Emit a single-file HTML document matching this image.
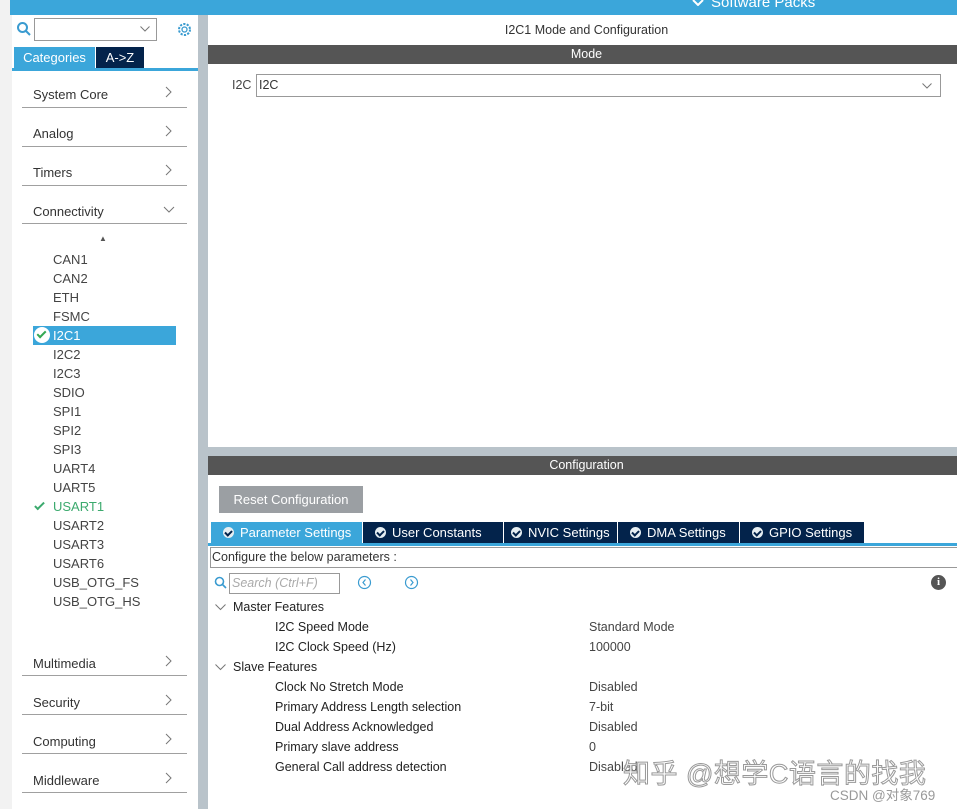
<!DOCTYPE html>
<html><head><meta charset="utf-8"><style>
*{margin:0;padding:0;box-sizing:border-box}
body{width:957px;height:809px;overflow:hidden;background:#b9c3ca;font-family:"Liberation Sans","Noto Sans CJK SC",sans-serif;font-size:12.5px;color:#333;position:relative}
.a{position:absolute;white-space:nowrap}
.cat{position:absolute;left:33px;font-size:13px;color:#333}
.cl{position:absolute;left:22px;width:165px;height:1px;background:#a0a0a0}
.chev{position:absolute;left:165px}
.it{position:absolute;left:53px;font-size:13px;color:#444}
.tab{position:absolute;top:522px;height:21px;background:#03234b;color:#fff;font-size:13px;line-height:21px;padding-left:12px}
.ck{display:inline-block;width:11px;height:11px;border-radius:50%;background:#e6eef2;margin-right:6px;vertical-align:-1px;position:relative}
.ck:after{content:"";position:absolute;left:3px;top:2px;width:3px;height:5px;border:solid #03234b;border-width:0 2px 2px 0;transform:rotate(45deg)}
.row{position:absolute;font-size:12.5px;color:#222}
</style></head><body>
<div class="a" style="left:0;top:0;width:12px;height:809px;background:#f2f2f2"></div>
<div class="a" style="left:10px;top:0;width:947px;height:15px;background:#3ba6da"></div>
<svg class="a" style="left:692px;top:0" width="12" height="6"><polyline points="1,0 6,5 11,0" fill="none" stroke="#fff" stroke-width="2"/></svg>
<div class="a" style="left:711px;top:-6px;color:#fff;font-size:15px">Software Packs</div>
<div class="a" style="left:12px;top:15px;width:186px;height:794px;background:#fff"></div>
<div class="a" style="left:208px;top:15px;width:749px;height:432px;background:#fff"></div>
<div class="a" style="left:208px;top:456px;width:749px;height:353px;background:#fff"></div>
<svg class="a" style="left:16px;top:21px" width="16" height="16"><circle cx="6.5" cy="6.5" r="4.5" fill="none" stroke="#3a9bd0" stroke-width="2"/><line x1="10" y1="10" x2="14" y2="14" stroke="#3a9bd0" stroke-width="2"/></svg>
<div class="a" style="left:34px;top:18px;width:123px;height:23px;border:1px solid #999;background:#fff"></div>
<svg class="a" style="left:140px;top:26px" width="10" height="6"><polyline points="0.5,0.5 5,5 9.5,0.5" fill="none" stroke="#777" stroke-width="1"/></svg>
<svg class="a" style="left:176px;top:21px" width="17" height="17"><circle cx="8.5" cy="8.5" r="5.5" fill="none" stroke="#3a9bd0" stroke-width="2" stroke-dasharray="2.2 1.3"/><circle cx="8.5" cy="8.5" r="2.5" fill="none" stroke="#3a9bd0" stroke-width="1.3"/></svg>
<div class="a" style="left:14px;top:47px;width:81px;height:21px;background:#3ba6da;color:#fff;font-size:13px;line-height:21px;text-align:center">Categories</div>
<div class="a" style="left:96px;top:47px;width:48px;height:21px;background:#03234b;color:#fff;font-size:13px;line-height:21px;text-align:center">A-&gt;Z</div>
<div class="a" style="left:12px;top:68px;width:186px;height:3px;background:#3ba6da"></div>
<div class="cat" style="top:87px">System Core</div><svg class="chev" style="top:86px" width="8" height="12"><polyline points="1,1 6,6 1,11" fill="none" stroke="#777"/></svg><div class="cl" style="top:107px"></div>
<div class="cat" style="top:126px">Analog</div><svg class="chev" style="top:125px" width="8" height="12"><polyline points="1,1 6,6 1,11" fill="none" stroke="#777"/></svg><div class="cl" style="top:146px"></div>
<div class="cat" style="top:165px">Timers</div><svg class="chev" style="top:164px" width="8" height="12"><polyline points="1,1 6,6 1,11" fill="none" stroke="#777"/></svg><div class="cl" style="top:185px"></div>
<div class="cat" style="top:204px">Connectivity</div><svg class="a" style="left:163px;top:206px" width="12" height="7"><polyline points="1,1 6,6 11,1" fill="none" stroke="#777"/></svg><div class="cl" style="top:223px"></div>
<div class="a" style="left:99px;top:234px;font-size:8px;color:#555">▲</div>
<div class="it" style="top:252px">CAN1</div>
<div class="it" style="top:271px">CAN2</div>
<div class="it" style="top:290px">ETH</div>
<div class="it" style="top:309px">FSMC</div>
<div class="a" style="left:33px;top:326px;width:143px;height:19px;background:#3ba6da"></div>
<div class="a" style="left:34px;top:327px;width:16px;height:16px;border-radius:50%;background:#fff"></div>
<div class="a" style="left:39px;top:329px;width:5px;height:9px;border:solid #34a853;border-width:0 2.5px 2.5px 0;transform:rotate(45deg)"></div>
<div class="it" style="top:328px;color:#fff">I2C1</div>
<div class="it" style="top:347px">I2C2</div>
<div class="it" style="top:366px">I2C3</div>
<div class="it" style="top:385px">SDIO</div>
<div class="it" style="top:404px">SPI1</div>
<div class="it" style="top:423px">SPI2</div>
<div class="it" style="top:442px">SPI3</div>
<div class="it" style="top:461px">UART4</div>
<div class="it" style="top:480px">UART5</div>
<div class="a" style="left:37px;top:500px;width:5px;height:10px;border:solid #3caa6e;border-width:0 2.5px 2.5px 0;transform:rotate(45deg)"></div>
<div class="it" style="top:499px;color:#3caa6e">USART1</div>
<div class="it" style="top:518px">USART2</div>
<div class="it" style="top:537px">USART3</div>
<div class="it" style="top:556px">USART6</div>
<div class="it" style="top:575px">USB_OTG_FS</div>
<div class="it" style="top:594px">USB_OTG_HS</div>
<div class="cat" style="top:656px">Multimedia</div><svg class="chev" style="top:655px" width="8" height="12"><polyline points="1,1 6,6 1,11" fill="none" stroke="#777"/></svg><div class="cl" style="top:675px"></div>
<div class="cat" style="top:695px">Security</div><svg class="chev" style="top:694px" width="8" height="12"><polyline points="1,1 6,6 1,11" fill="none" stroke="#777"/></svg><div class="cl" style="top:714px"></div>
<div class="cat" style="top:734px">Computing</div><svg class="chev" style="top:733px" width="8" height="12"><polyline points="1,1 6,6 1,11" fill="none" stroke="#777"/></svg><div class="cl" style="top:753px"></div>
<div class="cat" style="top:773px">Middleware</div><svg class="chev" style="top:772px" width="8" height="12"><polyline points="1,1 6,6 1,11" fill="none" stroke="#777"/></svg><div class="cl" style="top:792px"></div>
<div class="a" style="left:212px;top:23px;width:749px;text-align:center;font-size:12.5px;color:#333">I2C1 Mode and Configuration</div>
<div class="a" style="left:212px;top:45px;width:749px;height:19px;background:#555;color:#fff;text-align:center;font-size:12.5px;line-height:19px">Mode</div>
<div class="a" style="left:208px;top:45px;width:6px;height:19px;background:#555"></div>
<div class="a" style="left:232px;top:78px;font-size:12.5px;color:#444">I2C</div>
<div class="a" style="left:256px;top:74px;width:685px;height:23px;border:1px solid #999;padding:3px 2px;font-size:12.5px;color:#333">I2C</div>
<svg class="a" style="left:922px;top:83px" width="10" height="6"><polyline points="0.5,0.5 5,5 9.5,0.5" fill="none" stroke="#777"/></svg>
<div class="a" style="left:208px;top:456px;width:749px;height:19px;background:#555;color:#fff;text-align:center;font-size:12.5px;line-height:19px;padding-left:8px">Configuration</div>
<div class="a" style="left:219px;top:486px;width:144px;height:27px;background:#9b9fa3;color:#fff;font-size:13px;line-height:27px;text-align:center">Reset Configuration</div>
<div class="tab" style="left:211px;width:151px;background:#3ba6da"><span class="ck"></span>Parameter Settings</div>
<div class="tab" style="left:363px;width:140px"><span class="ck"></span>User Constants</div>
<div class="tab" style="left:504px;width:113px;padding-left:7px"><span class="ck"></span>NVIC Settings</div>
<div class="tab" style="left:618px;width:121px"><span class="ck"></span>DMA Settings</div>
<div class="tab" style="left:740px;width:124px"><span class="ck"></span>GPIO Settings</div>
<div class="a" style="left:208px;top:543px;width:749px;height:3px;background:#3ba6da"></div>
<div class="a" style="left:210px;top:547px;width:750px;height:21px;border:1px solid #999;padding:2px 1px;font-size:12.5px;color:#333">Configure the below parameters :</div>
<svg class="a" style="left:214px;top:576px" width="14" height="14"><circle cx="5.5" cy="5.5" r="4" fill="none" stroke="#3a9bd0" stroke-width="1.6"/><line x1="8.5" y1="8.5" x2="12" y2="12" stroke="#3a9bd0" stroke-width="1.6"/></svg>
<div class="a" style="left:229px;top:573px;width:111px;height:21px;border:1px solid #999;padding:2px 2px;font-size:12.5px;color:#aaa;font-style:italic">Search (Ctrl+F)</div>
<svg class="a" style="left:357px;top:575px" width="15" height="15"><circle cx="7.5" cy="7.5" r="6" fill="none" stroke="#3a9bd0" stroke-width="1.2"/><polyline points="8.5,4.5 6,7.5 8.5,10.5" fill="none" stroke="#3a9bd0" stroke-width="1.2"/></svg>
<svg class="a" style="left:404px;top:575px" width="15" height="15"><circle cx="7.5" cy="7.5" r="6" fill="none" stroke="#3a9bd0" stroke-width="1.2"/><polyline points="6.5,4.5 9,7.5 6.5,10.5" fill="none" stroke="#3a9bd0" stroke-width="1.2"/></svg>
<div class="a" style="left:931px;top:575px;width:15px;height:15px;border-radius:50%;background:#555;color:#fff;font-size:11px;font-weight:bold;line-height:15px;text-align:center;font-family:'Liberation Serif',serif">i</div>
<svg class="a" style="left:215px;top:604px" width="11" height="7"><polyline points="0.5,0.5 5.5,5.5 10.5,0.5" fill="none" stroke="#777"/></svg><div class="row" style="left:233px;top:600px">Master Features</div>
<div class="row" style="left:275px;top:620px">I2C Speed Mode</div><div class="row" style="left:589px;top:620px;color:#444">Standard Mode</div>
<div class="row" style="left:275px;top:640px">I2C Clock Speed (Hz)</div><div class="row" style="left:589px;top:640px;color:#444">100000</div>
<svg class="a" style="left:215px;top:664px" width="11" height="7"><polyline points="0.5,0.5 5.5,5.5 10.5,0.5" fill="none" stroke="#777"/></svg><div class="row" style="left:233px;top:660px">Slave Features</div>
<div class="row" style="left:275px;top:680px">Clock No Stretch Mode</div><div class="row" style="left:589px;top:680px;color:#444">Disabled</div>
<div class="row" style="left:275px;top:700px">Primary Address Length selection</div><div class="row" style="left:589px;top:700px;color:#444">7-bit</div>
<div class="row" style="left:275px;top:720px">Dual Address Acknowledged</div><div class="row" style="left:589px;top:720px;color:#444">Disabled</div>
<div class="row" style="left:275px;top:740px">Primary slave address</div><div class="row" style="left:589px;top:740px;color:#444">0</div>
<div class="row" style="left:275px;top:760px">General Call address detection</div><div class="row" style="left:589px;top:760px;color:#444">Disabled</div>
<div class="a" style="left:623px;top:752px;font-size:27px;color:rgba(255,255,255,0.85);-webkit-text-stroke:1px #999;letter-spacing:0.5px">知乎 @想学C语言的找我</div>
<div class="a" style="left:830px;top:784px;font-size:13.5px;color:#999">CSDN @对象769</div>
</body></html>
